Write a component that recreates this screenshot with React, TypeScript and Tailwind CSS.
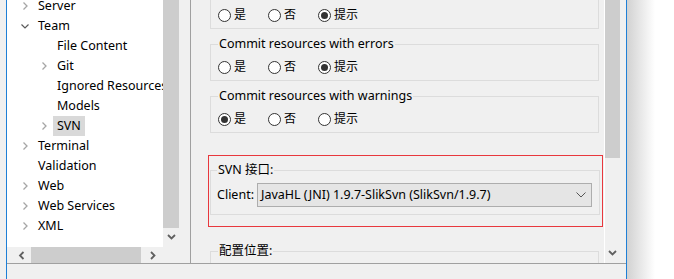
import React from "react";

type TreeItem = {
  label: string;
  level: 1 | 2;
  chev?: "right" | "down";
  selected?: boolean;
};

const tree: TreeItem[] = [
  { label: "Server", level: 1, chev: "right" },
  { label: "Team", level: 1, chev: "down" },
  { label: "File Content", level: 2 },
  { label: "Git", level: 2, chev: "right" },
  { label: "Ignored Resources", level: 2 },
  { label: "Models", level: 2 },
  { label: "SVN", level: 2, chev: "right", selected: true },
  { label: "Terminal", level: 1, chev: "right" },
  { label: "Validation", level: 1 },
  { label: "Web", level: 1, chev: "right" },
  { label: "Web Services", level: 1, chev: "right" },
  { label: "XML", level: 1, chev: "right" },
];

function TreeChevron({ dir }: { dir?: "right" | "down" }) {
  if (!dir) return <span className="w-[8px] h-[8px] shrink-0" />;
  return (
    <svg width="8" height="8" viewBox="0 0 8 8" className="shrink-0">
      {dir === "right" ? (
        <polyline points="2.5,0.5 6,4 2.5,7.5" fill="none" stroke="#a6a6a6" strokeWidth="1.3" />
      ) : (
        <polyline points="0.5,2.5 4,6 7.5,2.5" fill="none" stroke="#5a5a5a" strokeWidth="1.2" />
      )}
    </svg>
  );
}

function ScrollArrow({ dir }: { dir: "down" | "left" | "right" }) {
  const pts =
    dir === "down" ? "1,2 4.5,5.5 8,2" : dir === "left" ? "5.5,1 2,4.5 5.5,8" : "3,1 6.5,4.5 3,8";
  return (
    <svg width="9" height="9" viewBox="0 0 9 9" className="shrink-0">
      <polyline points={pts} fill="none" stroke="#606060" strokeWidth="1.8" />
    </svg>
  );
}

function Radio({ label, checked }: { label: string; checked?: boolean }) {
  return (
    <div className="w-[50px] flex items-center gap-[3px]">
      <span className="w-[13px] h-[13px] rounded-full border border-[#333] bg-white flex items-center justify-center">
        {checked && <span className="w-[7px] h-[7px] rounded-full bg-[#333]" />}
      </span>
      <span className="text-[12px]">{label}</span>
    </div>
  );
}

function RadioGroup({ title, value }: { title?: string; value: number }) {
  const opts = ["是", "否", "提示"];
  return (
    <fieldset className="w-[389px] ml-[19px] border border-[#dcdcdc] pl-[7px] pb-[5px]">
      <legend className="px-[1px] h-[16px] leading-[16px]">{title ?? "\u00a0"}</legend>
      <div className="flex items-center h-[16px] mt-[7px]">
        {opts.map((o, i) => (
          <Radio key={o} label={o} checked={i === value} />
        ))}
      </div>
    </fieldset>
  );
}

export default function App() {
  return (
    <div className="w-[674px] h-[279px] overflow-hidden flex bg-white text-[12.5px] text-black font-['Noto_Sans','Noto_Sans_CJK_SC',sans-serif]">
      <div className="w-[6px] bg-[#f0f0f0]" />
      <div className="w-[621px] border-x border-[#1e7fd6] bg-[#f0f0f0] flex flex-col">
        <div className="h-[264px] flex border-b border-[#a0a0a0]">
          {/* tree */}
          <div className="w-[172px] flex flex-col">
            <div className="h-[247px] flex">
              <div className="w-[156px] bg-white overflow-hidden">
                <div className="-mt-[4px]">
                  {tree.map((t) => (
                    <div
                      key={t.label}
                      className={`h-[20px] flex items-center whitespace-nowrap ${t.level === 1 ? "pl-[14px]" : "pl-[33px]"}`}
                    >
                      <TreeChevron dir={t.chev} />
                      <span className={`ml-[5px] px-[4px] h-[20px] leading-[20px] shrink-0 ${t.selected ? "bg-[#d9d9d9]" : ""}`}>
                        {t.label}
                      </span>
                    </div>
                  ))}
                </div>
              </div>
              <div className="w-[16px] flex flex-col items-center">
                <div className="w-[16px] h-[228px] bg-[#cdcdcd]" />
                <div className="mt-[5px]">
                  <ScrollArrow dir="down" />
                </div>
              </div>
            </div>
            <div className="h-[16px] flex">
              <div className="w-[156px] flex items-center">
                <div className="w-[24px] flex justify-center pl-[6px]">
                  <ScrollArrow dir="left" />
                </div>
                <div className="w-[110px] h-[16px] bg-[#cdcdcd]" />
                <div className="flex-1 flex justify-center">
                  <ScrollArrow dir="right" />
                </div>
              </div>
            </div>
          </div>
          <div className="w-[11px]" />
          {/* preference page */}
          <div className="flex-1 flex border-l border-[#a0a0a0]">
            <div className="w-[413px] overflow-hidden">
              <div className="-mt-[16px] flex flex-col">
                <RadioGroup value={2} />
                <div className="mt-[7px]">
                  <RadioGroup title="Commit resources with errors" value={2} />
                </div>
                <div className="mt-[7px]">
                  <RadioGroup title="Commit resources with warnings" value={0} />
                </div>
                <div className="mt-[22px] ml-[17px] w-[395px] border border-[#e8383d] pl-[1px] pr-[2px] pt-[6px] pb-[11px]">
                  <fieldset className="w-[390px] border border-[#dcdcdc] pl-[6px] pr-[7px] pb-[7px]">
                    <legend className="px-[1px] h-[16px] leading-[16px]">SVN 接口:</legend>
                    <div className="flex items-center mt-[5px]">
                      <span className="w-[40px]">Client:</span>
                      <div className="flex-1 h-[24px] bg-[#e5e5e5] border border-[#adadad] flex items-center pl-[3px] pr-[5px]">
                        <span className="flex-1">JavaHL (JNI) 1.9.7-SlikSvn (SlikSvn/1.9.7)</span>
                        <svg width="10" height="6" viewBox="0 0 10 6">
                          <polyline points="0.5,0.5 5,5 9.5,0.5" fill="none" stroke="#555" strokeWidth="1" />
                        </svg>
                      </div>
                    </div>
                  </fieldset>
                </div>
                <fieldset className="mt-[16px] w-[389px] ml-[19px] h-[40px] border border-[#dcdcdc] pl-[7px]">
                  <legend className="px-[1px] h-[16px] leading-[16px]">配置位置:</legend>
                </fieldset>
              </div>
            </div>
            <div className="w-[16px] border-l border-white flex flex-col items-center">
              <div className="w-[15px] h-[158px] bg-[#cdcdcd]" />
              <div className="mt-auto mb-[5px]">
                <ScrollArrow dir="down" />
              </div>
            </div>
            <div className="w-[6px]" />
          </div>
        </div>
        <div className="flex-1" />
      </div>
      <div className="w-[28px] bg-gradient-to-r from-[#d2d2d2] to-white" />
    </div>
  );
}
